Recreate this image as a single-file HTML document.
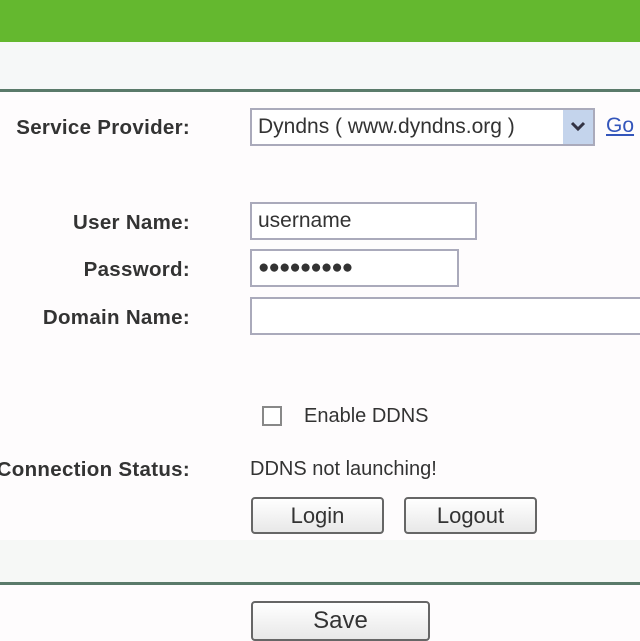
<!DOCTYPE html>
<html><head><style>
body{margin:0;width:640px;height:640px;overflow:hidden;background:#fefcfd;font-family:"Liberation Sans",sans-serif;color:#222;position:relative}
.a{position:absolute}
.lab{position:absolute;font-size:20.5px;font-weight:bold;color:#333;text-align:right;right:450px;white-space:nowrap;letter-spacing:0.3px}
.box{position:absolute;border:2px solid #aab;background:#fff;box-sizing:border-box;font-size:21px;color:#333;padding-left:6px}
.btn{position:absolute;border:2px solid #666;border-radius:4px;background:linear-gradient(#fff,#e8e8e8);box-sizing:border-box;font-size:22px;text-align:center;color:#333}
</style></head><body>
<div class="a" style="left:0;top:0;width:640px;height:42px;background:#64b82f"></div>
<div class="a" style="left:0;top:42px;width:640px;height:48px;background:#f6f8f8"></div>
<div class="a" style="left:0;top:89px;width:640px;height:3px;background:#5a7a6a"></div>
<div class="lab" style="top:116px">Service Provider:</div>
<div class="box" style="left:250px;top:108px;width:345px;height:38px;line-height:34px">Dyndns ( www.dyndns.org )</div>
<div class="a" style="left:563px;top:110px;width:30px;height:34px;background:#c4d4ec"></div>
<svg class="a" style="left:570px;top:120px" width="16" height="12"><path d="M2 3 L8 9 L14 3" stroke="#334" stroke-width="3" fill="none"/></svg>
<div class="a" style="left:606px;top:114px;font-size:21px;color:#3355bb;text-decoration:underline">Go</div>
<div class="lab" style="top:211px">User Name:</div>
<div class="box" style="left:250px;top:202px;width:227px;height:38px;line-height:34px">username</div>
<div class="lab" style="top:258px">Password:</div>
<div class="box" style="left:250px;top:249px;width:209px;height:38px;line-height:34px;font-size:19px;letter-spacing:-1px">●●●●●●●●●</div>
<div class="lab" style="top:306px">Domain Name:</div>
<div class="box" style="left:250px;top:297px;width:400px;height:38px"></div>
<div class="a" style="left:262px;top:406px;width:20px;height:20px;border:2px solid #888;box-sizing:border-box;background:#fff"></div>
<div class="a" style="left:304px;top:405px;font-size:20px;color:#333">Enable DDNS</div>
<div class="lab" style="top:458px">Connection Status:</div>
<div class="a" style="left:250px;top:458px;font-size:20px;color:#333">DDNS not launching!</div>
<div class="btn" style="left:251px;top:497px;width:133px;height:37px;line-height:33px">Login</div>
<div class="btn" style="left:404px;top:497px;width:133px;height:37px;line-height:33px">Logout</div>
<div class="a" style="left:0;top:540px;width:640px;height:42px;background:#f6f8f6"></div>
<div class="a" style="left:0;top:582px;width:640px;height:3px;background:#5a7a6a"></div>
<div class="btn" style="left:251px;top:601px;width:179px;height:40px;line-height:36px;font-size:24px">Save</div>
</body></html>
